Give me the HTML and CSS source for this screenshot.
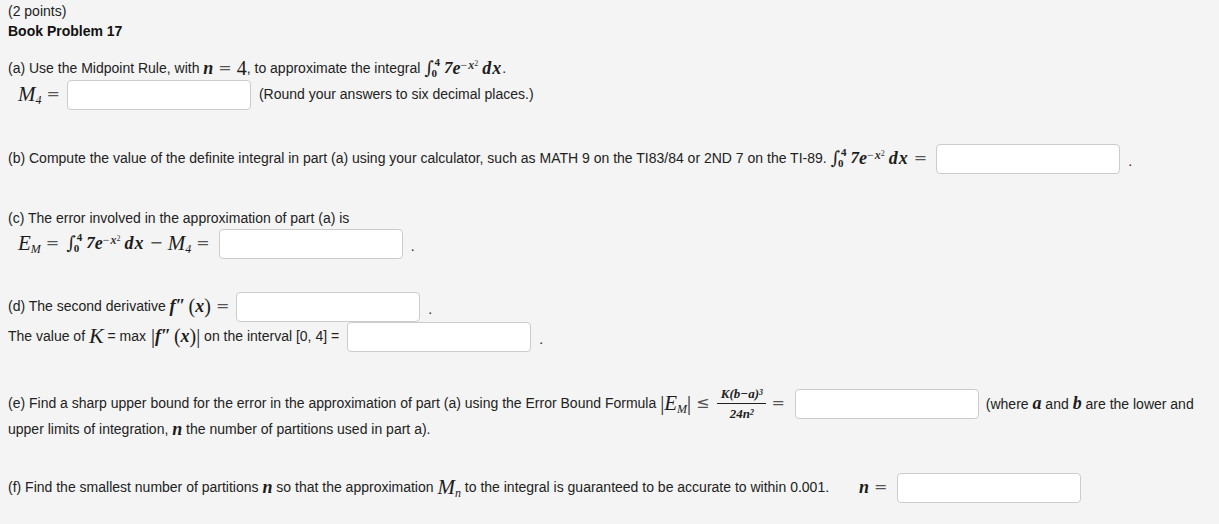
FILE: index.html
```html
<!DOCTYPE html>
<html lang="en">
<head>
  <meta charset="UTF-8">
  <title>Book Problem 17</title>
  <link rel="stylesheet" href="styles.css">
</head>
<body>
  <div class="line points">(2 points)</div>
  <div class="line title">Book Problem 17</div>

  <div class="line part-a">(a) Use the Midpoint Rule, with&nbsp;<span class="m">n</span><span class="eq">=</span><span class="num">4</span>, to approximate the integral&nbsp;
    <span class="int">∫<span class="limits"><i>4</i><i>0</i></span></span><span class="seven">7</span><span class="m">e</span><sup class="exp">−<b>x</b><small>2</small></sup><span class="m dx">dx</span>.</div>
  <div class="row row-m4">
    <span class="m big indent">M<sub>4</sub></span><span class="eq">=</span>
    <input class="answer" type="text">
    <span class="after">(Round your answers to six decimal places.)</span>
  </div>

  <div class="row row-b">
    (b) Compute the value of the definite integral in part (a) using your calculator, such as MATH 9 on the TI83/84 or 2ND 7 on the TI-89.&nbsp;
    <span class="int">∫<span class="limits"><i>4</i><i>0</i></span></span><span class="seven">7</span><span class="m">e</span><sup class="exp">−<b>x</b><small>2</small></sup><span class="m dx">dx</span><span class="eq">=</span>
    <input class="answer" type="text">
    <span class="dot">.</span>
  </div>

  <div class="line part-c">(c) The error involved in the approximation of part (a) is</div>
  <div class="row row-c">
    <span class="m big indent">E<sub>M</sub></span><span class="eq">=</span>
    <span class="int">∫<span class="limits"><i>4</i><i>0</i></span></span><span class="seven">7</span><span class="m">e</span><sup class="exp">−<b>x</b><small>2</small></sup><span class="m dx">dx</span><span class="eq minus">−</span><span class="m big">M<sub>4</sub></span><span class="eq">=</span>
    <input class="answer" type="text">
    <span class="dot">.</span>
  </div>

  <div class="row row-d">
    (d) The second derivative&nbsp;<span class="m fx">f″</span><span class="paren">(</span><span class="m">x</span><span class="paren">)</span><span class="eq">=</span>
    <input class="answer" type="text">
    <span class="dot">.</span>
  </div>
  <div class="row row-k">
    The value of&nbsp;<span class="m big k">K</span>&nbsp;= max&nbsp;<span class="paren bar">|</span><span class="m fx">f″</span><span class="paren">(</span><span class="m">x</span><span class="paren">)|</span>&nbsp;on the interval [0, 4] =
    <input class="answer" type="text">
    <span class="dot">.</span>
  </div>

  <div class="row row-e">
    (e) Find a sharp upper bound for the error in the approximation of part (a) using the Error Bound Formula&nbsp;<span class="paren">|</span><span class="m big">E<sub>M</sub></span><span class="paren">|</span><span class="eq">≤</span>
    <span class="frac"><span class="top">K(b−a)<small>3</small></span><span class="bottom">24n<small>2</small></span></span><span class="eq">=</span>
    <input class="answer" type="text">
    <span class="after">(where&nbsp;<span class="m">a</span>&nbsp;and&nbsp;<span class="m">b</span>&nbsp;are the lower and</span>
  </div>
  <div class="line part-e2">upper limits of integration,&nbsp;<span class="m">n</span>&nbsp;the number of partitions used in part a).</div>

  <div class="row row-f">
    (f) Find the smallest number of partitions&nbsp;<span class="m">n</span>&nbsp;so that the approximation&nbsp;<span class="m big">M<sub>n</sub></span>&nbsp;to the integral is guaranteed to be accurate to within 0.001.
    <span class="m n-label">n</span><span class="eq">=</span>
    <input class="answer" type="text">
  </div>
</body>
</html>
```

FILE: styles.css
```css
body {
  margin: 0;
  padding: 0 8px;
  background: #f4f4f4;
  color: #222;
  font-family: "Liberation Sans", Arial, sans-serif;
  font-size: 14px;
  line-height: 20px;
  white-space: nowrap;
}
.line {
  height: 20px;
  display: flex;
  align-items: center;
}
.points { margin-top: 1px; }
.title { font-weight: bold; color: #111; }
.part-a { margin-top: 17px; }
.part-c { margin-top: 34px; }
.part-e2 { margin-top: 0; }
.row {
  box-sizing: border-box;
  height: 30px;
  padding-bottom: 2px;
  display: flex;
  align-items: center;
}
.row-m4 { margin-top: 2px; }
.row-b { margin-top: 34px; }
.row-c { margin-top: 1px; }
.row-d { margin-top: 33px; }
.row-e { margin-top: 37px; }
.row-f { margin-top: 34px; }
.answer {
  box-sizing: border-box;
  align-self: flex-start;
  width: 184px;
  height: 30px;
  margin: 0 0 0 7px;
  padding: 4px 6px;
  background: #fff;
  border: 1px solid #ccc;
  border-radius: 4px;
}
.row-m4 .answer { margin-left: 5px; }
.row-d .answer { margin-left: 5px; }
.row-k .answer { margin-left: 8px; }
.row-e .answer { margin-left: 8px; }
.after { margin-left: 8px; }
.row-e .after { margin-left: 7px; }
.dot { margin-left: 8px; padding-top: 6px; }
.indent { margin-left: 10px; }
.m {
  font-family: "Liberation Serif", serif;
  font-style: italic;
  font-weight: bold;
  font-size: 18px;
  color: #1c1c1c;
}
.big { font-size: 21px; font-weight: normal; }
.big sub {
  font-size: 12px;
  line-height: 0;
  vertical-align: -3px;
}
.k { font-size: 22px; }
.dx { margin-left: 4px; letter-spacing: 1px; }
.fx { font-size: 18px; margin-right: 3px; }
.eq {
  margin: 0 2px 0 5px;
  font-family: "DejaVu Sans", sans-serif;
  font-size: 16px;
  color: #555;
}
.eq.minus { margin: 0 5px 0 5px; }
.row-c .int { margin-left: 5px; }
.num {
  font-family: "Liberation Serif", serif;
  font-size: 20px;
  margin-left: 3px;
  color: #1c1c1c;
}
.seven {
  margin-left: 4px;
  font-family: "Liberation Serif", serif;
  font-size: 17px;
  font-style: italic;
  font-weight: bold;
  color: #1c1c1c;
}
.paren {
  font-family: "Liberation Serif", serif;
  font-size: 20px;
  color: #1c1c1c;
}
.bar { margin-left: 1px; }
.int {
  display: inline-flex;
  align-items: center;
  font-family: "DejaVu Serif", serif;
  font-size: 18px;
  line-height: 20px;
}
.limits {
  display: inline-flex;
  flex-direction: column;
  margin-left: -2px;
  font-family: "Liberation Serif", serif;
  font-size: 11px;
  font-weight: bold;
  line-height: 11px;
}
.limits i { font-style: normal; }
.limits i:first-child { margin-left: 3px; }
.exp {
  margin-top: -8px;
  font-family: "Liberation Serif", serif;
  font-size: 12px;
  line-height: 12px;
  color: #333;
}
.exp b { font-style: italic; margin-left: 1px; }
.exp small { font-size: 8px; vertical-align: 3px; }
.frac {
  display: inline-flex;
  flex-direction: column;
  align-items: center;
  width: 49px;
  margin-left: 6px;
  font-family: "Liberation Serif", serif;
  font-size: 13px;
  font-style: italic;
  font-weight: bold;
  line-height: 15px;
}
.frac small { font-size: 8px; vertical-align: 3px; line-height: 0; }
.top { width: 100%; padding-bottom: 2px; border-bottom: 1px solid #222; text-align: center; }
.bottom { padding-top: 2px; }
.n-label { margin-left: 30px; }
```
